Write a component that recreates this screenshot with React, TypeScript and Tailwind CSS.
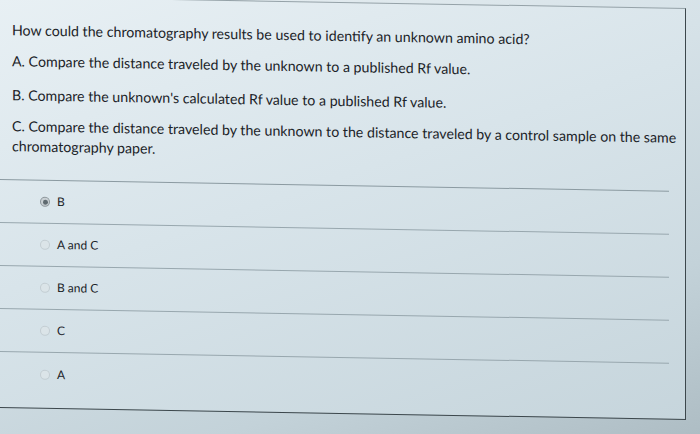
import { useState } from "react";

const choices = ["B", "A and C", "B and C", "C", "A"];

function Radio({ checked }: { checked: boolean }) {
  return (
    <span
      className={
        checked
          ? "flex h-[10px] w-[10px] items-center justify-center rounded-full border border-[#8d969b] bg-[#c9d0d4]"
          : "h-[10px] w-[10px] rounded-full border border-[#c3cdd2] bg-[#dbe4e8]"
      }
    >
      {checked && <span className="h-[5px] w-[5px] rounded-full bg-[#5f6a70]" />}
    </span>
  );
}

export default function App() {
  const [picked, setPicked] = useState("B");

  return (
    <div className="h-[434px] w-[700px] overflow-hidden bg-[linear-gradient(160deg,#e9f0f3_0%,#d6e2e8_40%,#c3d2d9_75%,#aebdc4_100%)] font-['Lato','Open_Sans',sans-serif] text-[#1b2328]">
      <div className="-mt-[4px] h-[412px] w-[686px] origin-top-left skew-y-[1deg] border-r border-b border-t border-r-[#3c474c] border-b-[#3c474c] border-t-[#95a2a8] bg-[linear-gradient(160deg,#e8f0f4_0%,#d8e4ea_45%,#c6d5dc_100%)]">
        <div className="pl-[12px] pt-[24px] text-[14.2px] leading-[18px]">
          <p>How could the chromatography results be used to identify an unknown amino acid?</p>
          <p className="mt-[13px]">A. Compare the distance traveled by the unknown to a published Rf value.</p>
          <p className="mt-[16px]">B. Compare the unknown's calculated Rf value to a published Rf value.</p>
          <p className="mt-[12px] leading-[20px]">
            C. Compare the distance traveled by the unknown to the distance traveled by a control sample on the same
            chromatography paper.
          </p>
        </div>

        <div className="mr-[16px] mt-[23px] border-t border-[#8b9aa1]">
          {choices.map((c, i) => (
            <button
              key={c}
              onClick={() => setPicked(c)}
              className={
                i < choices.length - 1
                  ? "flex h-[43px] w-full items-center gap-[7px] border-b border-[#98a7ae] pl-[40px] text-left text-[12px]"
                  : "flex h-[43px] w-full items-center gap-[7px] pl-[40px] text-left text-[12px]"
              }
            >
              <Radio checked={picked === c} />
              <span>{c}</span>
            </button>
          ))}
        </div>
      </div>
    </div>
  );
}
